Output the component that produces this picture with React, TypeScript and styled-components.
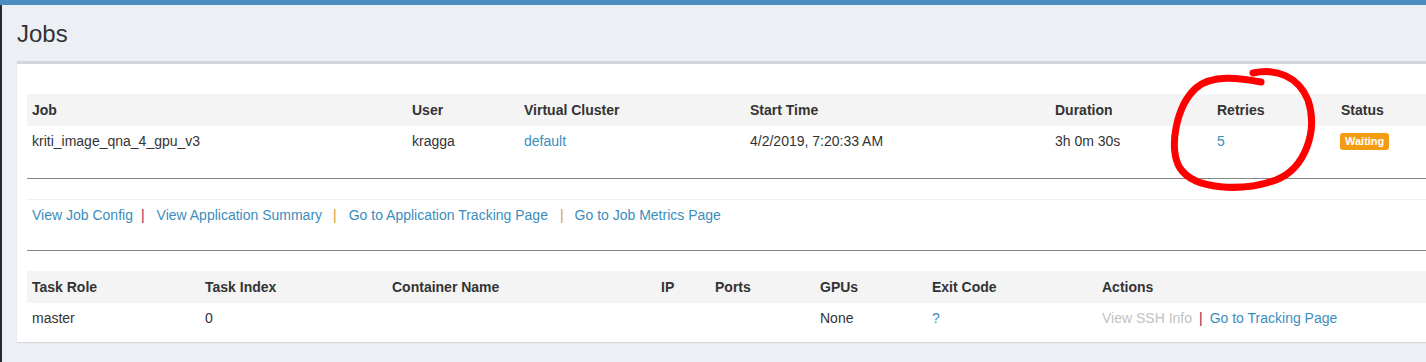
import styled, { createGlobalStyle } from "styled-components";

const GlobalStyle = createGlobalStyle`
  html, body {
    margin: 0;
    padding: 0;
    background: #ecf0f5;
    overflow: hidden;
  }
  body {
    font-family: "Liberation Sans", Arial, sans-serif;
    font-size: 14px;
    color: #333;
  }
`;

const TopBar = styled.div`
  height: 5px;
  background: #4a8cbe;
`;

const Main = styled.div`
  display: flex;
  min-height: 357px;
`;

const SideStrip = styled.div`
  width: 2px;
  background: #222d32;
  flex-shrink: 0;
`;

const Content = styled.div`
  flex: 1;
  padding: 16px 0 0 15px;
  position: relative;
`;

const Title = styled.h1`
  margin: 0;
  font-size: 24px;
  font-weight: 400;
  line-height: 26px;
  color: #333;
`;

const Box = styled.div`
  margin-top: 14px;
  width: 1500px;
  background: #fff;
  border-top: 3px solid #d2d6de;
  box-shadow: 0 1px 1px rgba(0, 0, 0, 0.1);
  padding: 30px 10px 7px 10px;
`;

const Table = styled.table`
  border-collapse: collapse;
  table-layout: fixed;
  width: 1480px;
`;

const Th = styled.th<{ $w: number }>`
  box-sizing: border-box;
  width: ${({ $w }) => $w}px;
  height: 32px;
  padding: 0 5px;
  text-align: left;
  font-weight: 700;
  background: #f4f4f4;
  vertical-align: middle;
`;

const Td = styled.td`
  box-sizing: border-box;
  height: 32px;
  padding: 0 5px 2px;
  vertical-align: middle;
`;

const Link = styled.a<{ $disabled?: boolean }>`
  color: ${({ $disabled }) => ($disabled ? "#c2c2c2" : "#3c8dbc")};
  text-decoration: none;
  cursor: pointer;
`;

const Badge = styled.span`
  display: inline-block;
  background: #f39c12;
  color: #fff;
  font-size: 11px;
  font-weight: 700;
  line-height: 1;
  padding: 3px 5px 3px;
  border-radius: 3px;
  margin-left: -1px;
`;

const Rule = styled.hr<{ $light?: boolean }>`
  border: 0;
  border-top: 1px solid ${({ $light }) => ($light ? "#f0f0f0" : "#858585")};
  margin: 0;
`;

const Spacer = styled.div<{ $h: number }>`
  height: ${({ $h }) => $h}px;
`;

const LinkRow = styled.div`
  box-sizing: border-box;
  display: flex;
  align-items: center;
  height: 31px;
  padding: 0 0 2px 5px;
`;

const Pipe = styled.span<{ $color: string; $l: number; $r: number }>`
  color: ${({ $color }) => $color};
  margin: 0 ${({ $r }) => $r}px 0 ${({ $l }) => $l}px;
`;

const Annotation = styled.svg`
  position: absolute;
  left: -2px;
  top: -5px;
  width: 1426px;
  height: 362px;
  pointer-events: none;
`;

export default function App() {
  return (
    <>
      <GlobalStyle />
      <TopBar />
      <Main>
        <SideStrip />
        <Content>
          <Title>Jobs</Title>
          <Box>
            <Table>
              <thead>
                <tr>
                  <Th $w={380}>Job</Th>
                  <Th $w={112}>User</Th>
                  <Th $w={226}>Virtual Cluster</Th>
                  <Th $w={305}>Start Time</Th>
                  <Th $w={162}>Duration</Th>
                  <Th $w={124}>Retries</Th>
                  <Th $w={171}>Status</Th>
                </tr>
              </thead>
              <tbody>
                <tr>
                  <Td>kriti_image_qna_4_gpu_v3</Td>
                  <Td>kragga</Td>
                  <Td>
                    <Link>default</Link>
                  </Td>
                  <Td>4/2/2019, 7:20:33 AM</Td>
                  <Td>3h 0m 30s</Td>
                  <Td>
                    <Link>5</Link>
                  </Td>
                  <Td>
                    <Badge>Waiting</Badge>
                  </Td>
                </tr>
              </tbody>
            </Table>
            <Spacer $h={20} />
            <Rule />
            <Spacer $h={20} />
            <Rule $light />
            <LinkRow>
              <Link>View Job Config</Link>
              <Pipe $color="#8e2a55" $l={8} $r={12}>|</Pipe>
              <Link>View Application Summary</Link>
              <Pipe $color="#d99a3c" $l={11} $r={12}>|</Pipe>
              <Link>Go to Application Tracking Page</Link>
              <Pipe $color="#d99a3c" $l={12} $r={11}>|</Pipe>
              <Link>Go to Job Metrics Page</Link>
            </LinkRow>
            <Spacer $h={19} />
            <Rule />
            <Spacer $h={20} />
            <Table>
              <thead>
                <tr>
                  <Th $w={173}>Task Role</Th>
                  <Th $w={187}>Task Index</Th>
                  <Th $w={269}>Container Name</Th>
                  <Th $w={54}>IP</Th>
                  <Th $w={105}>Ports</Th>
                  <Th $w={112}>GPUs</Th>
                  <Th $w={170}>Exit Code</Th>
                  <Th $w={410}>Actions</Th>
                </tr>
              </thead>
              <tbody>
                <tr>
                  <Td>master</Td>
                  <Td>0</Td>
                  <Td></Td>
                  <Td></Td>
                  <Td></Td>
                  <Td>None</Td>
                  <Td>
                    <Link>?</Link>
                  </Td>
                  <Td>
                    <Link $disabled>View SSH Info</Link>
                    <Pipe $color="#8b2252" $l={7} $r={7}>|</Pipe>
                    <Link>Go to Tracking Page</Link>
                  </Td>
                </tr>
              </tbody>
            </Table>
          </Box>
          <Annotation viewBox="0 0 1426 362">
            <path
              d="M1261 82 C1240 78 1212 74 1196 88 C1176 106 1168 150 1180 168 C1194 190 1242 192 1276 180 C1306 168 1318 130 1308 100 C1298 76 1276 68 1253 73"
              fill="none"
              stroke="#ff0000"
              strokeWidth="7"
              strokeLinecap="round"
              strokeLinejoin="round"
            />
          </Annotation>
        </Content>
      </Main>
    </>
  );
}
